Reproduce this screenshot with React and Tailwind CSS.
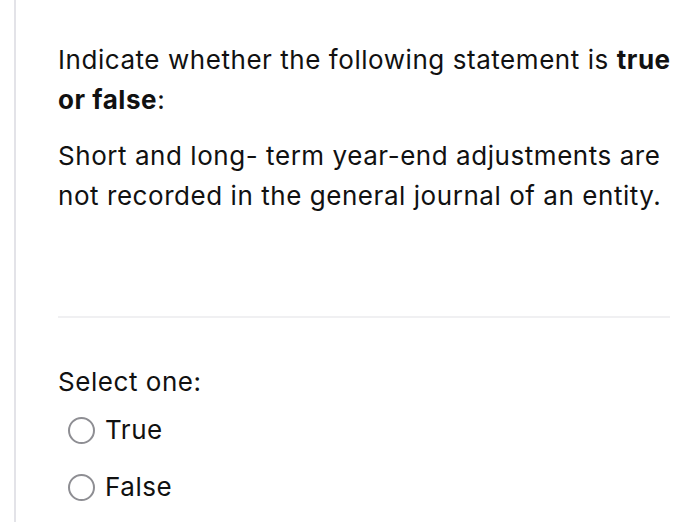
import React, { useState } from 'react';

const Radio = ({ label, checked, onSelect }) => (
  <label className="flex items-center gap-[10px] cursor-pointer" onClick={onSelect}>
    <span className="w-[27px] h-[27px] rounded-full border-2 border-[#8e8e93] flex items-center justify-center">
      {checked && <span className="w-[13px] h-[13px] rounded-full bg-[#007aff]" />}
    </span>
    <span>{label}</span>
  </label>
);

const App = () => {
  const [answer, setAnswer] = useState(null);

  return (
    <div className="min-h-[522px] bg-white pl-[14px]" style={{ fontFamily: 'Inter, "Liberation Sans", Arial, sans-serif' }}>
      <div className="min-h-[522px] border-l-2 border-[#e3e3e8] pl-[42px] pr-[30px] pt-[40px] text-[26px] leading-[40px] tracking-[0.55px] text-[#111]">
        <p className="mr-[-10px]">
          Indicate whether the following statement is <b className="font-bold">true or false</b>:
        </p>
        <p className="mt-[16px] mr-[-10px]">
          Short and long- term year-end adjustments are not recorded in the general journal of an entity.
        </p>
        <div className="mt-[100px] border-t-2 border-[#f0f0f2]" />
        <div className="mt-[44px]">Select one:</div>
        <div className="mt-[8px] pl-[10px] flex flex-col gap-[17px]">
          <Radio label="True" checked={answer === 'true'} onSelect={() => setAnswer('true')} />
          <Radio label="False" checked={answer === 'false'} onSelect={() => setAnswer('false')} />
        </div>
      </div>
    </div>
  );
};

export default App;
